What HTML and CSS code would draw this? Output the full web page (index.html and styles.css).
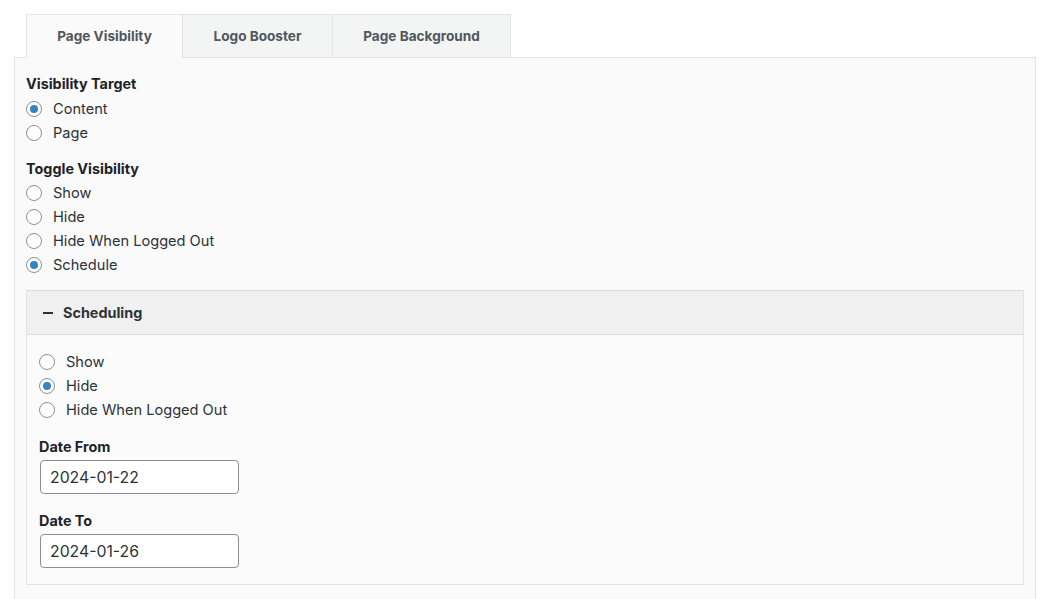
FILE: index.html
```html
<!DOCTYPE html>
<html lang="en">
<head>
    <meta charset="UTF-8">
    <meta name="viewport" content="width=device-width, initial-scale=1.0">
    <title>Page Visibility</title>
    <link rel="stylesheet" href="styles.css">
</head>
<body>
    <div class="wrap">
        <div class="tabs">
            <div class="tab active tab-visibility">Page Visibility</div>
            <div class="tab tab-logo">Logo Booster</div>
            <div class="tab tab-background">Page Background</div>
        </div>
        <div class="panel">
            <div class="field-title">Visibility Target</div>
            <label class="radio-row"><input type="radio" name="target" checked> Content</label>
            <label class="radio-row"><input type="radio" name="target"> Page</label>

            <div class="field-title spaced">Toggle Visibility</div>
            <label class="radio-row"><input type="radio" name="toggle"> Show</label>
            <label class="radio-row"><input type="radio" name="toggle"> Hide</label>
            <label class="radio-row"><input type="radio" name="toggle"> Hide When Logged Out</label>
            <label class="radio-row"><input type="radio" name="toggle" checked> Schedule</label>

            <div class="schedule-box">
                <div class="schedule-header"><span class="minus"></span>Scheduling</div>
                <div class="schedule-body">
                    <label class="radio-row"><input type="radio" name="sched"> Show</label>
                    <label class="radio-row"><input type="radio" name="sched" checked> Hide</label>
                    <label class="radio-row"><input type="radio" name="sched"> Hide When Logged Out</label>

                    <div class="field-title date-title">Date From</div>
                    <input class="date-input" type="text" value="2024-01-22">

                    <div class="field-title date-title second">Date To</div>
                    <input class="date-input" type="text" value="2024-01-26">
                </div>
            </div>
        </div>
    </div>
</body>
</html>
```

FILE: styles.css
```css
body {
    margin: 0;
    padding: 0;
    background-color: #ffffff;
    font-family: Inter, "Noto Sans", sans-serif;
    font-size: 14.6px;
    color: #1d2327;
}

.wrap {
    padding: 14px 14px 0 14px;
}

.tabs {
    display: flex;
    margin-left: 12px;
    position: relative;
    z-index: 1;
}

.tab {
    height: 42px;
    line-height: 42px;
    text-align: center;
    font-size: 13.6px;
    font-weight: 700;
    color: #50575e;
    background-color: #f3f4f4;
    border: 1px solid #e2e4e7;
    border-bottom: none;
    box-sizing: content-box;
}

.tab + .tab {
    border-left: none;
}

.tab.active {
    background-color: #fafafa;
    height: 43px;
    margin-bottom: -1px;
}

.tab-visibility { width: 155px; }
.tab-logo { width: 149px; }
.tab-background { width: 177px; }

.panel {
    background-color: #fafafa;
    border: 1px solid #e2e4e7;
    padding: 16px 11px 40px 11px;
}

.field-title {
    font-weight: 700;
    font-size: 14.4px;
    line-height: 20px;
    color: #1d2327;
    margin-bottom: 3px;
}

.field-title.spaced {
    margin-top: 14px;
    margin-bottom: 2px;
}

.radio-row {
    display: flex;
    align-items: center;
    height: 24px;
    color: #2c3338;
}

.radio-row input {
    appearance: none;
    -webkit-appearance: none;
    width: 16px;
    height: 16px;
    margin: 0 11px 0 0;
    border: 1px solid #8c8f94;
    border-radius: 50%;
    background-color: #ffffff;
    display: flex;
    align-items: center;
    justify-content: center;
    flex-shrink: 0;
}

.radio-row input:checked::before {
    content: "";
    width: 8px;
    height: 8px;
    border-radius: 50%;
    background-color: #3582c4;
}

.schedule-box {
    margin-top: 13px;
    border: 1px solid #e3e3e3;
    border-top-color: #dcdcde;
    background-color: #fbfbfb;
}

.schedule-header {
    display: flex;
    align-items: center;
    height: 43px;
    padding-left: 16px;
    background-color: #f0f0f0;
    border-bottom: 1px solid #dcdcde;
    font-weight: 700;
    font-size: 14.4px;
    color: #2c3338;
}

.minus {
    width: 10px;
    height: 2px;
    background-color: #2c3338;
    margin-right: 10px;
}

.schedule-body {
    padding: 15px 12px 16px 12px;
}

.date-title {
    margin-top: 15px;
    margin-bottom: 3px;
}

.date-title.second {
    margin-top: 17px;
}

.date-input {
    display: block;
    box-sizing: border-box;
    width: 199px;
    height: 34px;
    margin: 0 0 0 1px;
    padding: 0 9px;
    border: 1px solid #8c8f94;
    border-radius: 4px;
    background-color: #ffffff;
    font-family: Inter, "Noto Sans", sans-serif;
    font-size: 15.8px;
    color: #2c3338;
}
```
